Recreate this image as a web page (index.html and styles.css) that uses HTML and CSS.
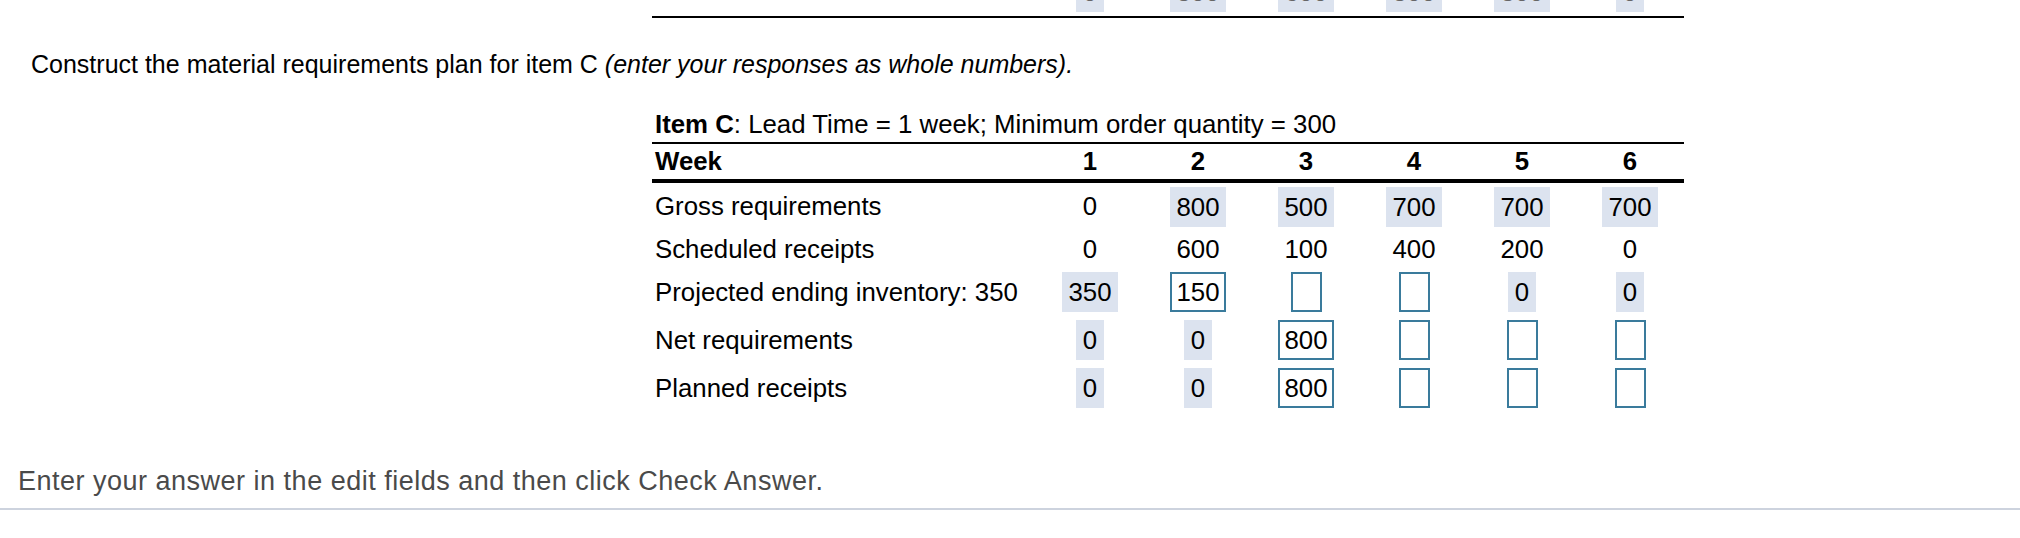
FILE: index.html
```html
<!DOCTYPE html>
<html lang="en">
<head>
<meta charset="utf-8">
<title>MRP item C</title>
<link rel="stylesheet" href="styles.css">
</head>
<body>
<div class="prev">
  <div class="row prev-row">
    <div class="label">Planned order releases</div>
    <div class="cell"><span class="hl">0</span></div>
    <div class="cell"><span class="hl">300</span></div>
    <div class="cell"><span class="hl">600</span></div>
    <div class="cell"><span class="hl">300</span></div>
    <div class="cell"><span class="hl">300</span></div>
    <div class="cell"><span class="hl">0</span></div>
  </div>
</div>

<p class="prompt">Construct the material requirements plan for item C <em>(enter your responses as whole numbers).</em></p>

<div class="mrp">
  <div class="caption"><b>Item C</b>: Lead Time = 1 week; Minimum order quantity = 300</div>
  <div class="row head">
    <div class="label">Week</div>
    <div class="cell">1</div>
    <div class="cell">2</div>
    <div class="cell">3</div>
    <div class="cell">4</div>
    <div class="cell">5</div>
    <div class="cell">6</div>
  </div>
  <div class="row r-gross">
    <div class="label">Gross requirements</div>
    <div class="cell">0</div>
    <div class="cell"><span class="hl">800</span></div>
    <div class="cell"><span class="hl">500</span></div>
    <div class="cell"><span class="hl">700</span></div>
    <div class="cell"><span class="hl">700</span></div>
    <div class="cell"><span class="hl">700</span></div>
  </div>
  <div class="row r-sched">
    <div class="label">Scheduled receipts</div>
    <div class="cell">0</div>
    <div class="cell">600</div>
    <div class="cell">100</div>
    <div class="cell">400</div>
    <div class="cell">200</div>
    <div class="cell">0</div>
  </div>
  <div class="row r-input">
    <div class="label">Projected ending inventory: 350</div>
    <div class="cell"><span class="hl">350</span></div>
    <div class="cell"><span class="inp">150</span></div>
    <div class="cell"><span class="inp"></span></div>
    <div class="cell"><span class="inp"></span></div>
    <div class="cell"><span class="hl">0</span></div>
    <div class="cell"><span class="hl">0</span></div>
  </div>
  <div class="row r-input">
    <div class="label">Net requirements</div>
    <div class="cell"><span class="hl">0</span></div>
    <div class="cell"><span class="hl">0</span></div>
    <div class="cell"><span class="inp">800</span></div>
    <div class="cell"><span class="inp"></span></div>
    <div class="cell"><span class="inp"></span></div>
    <div class="cell"><span class="inp"></span></div>
  </div>
  <div class="row r-input">
    <div class="label">Planned receipts</div>
    <div class="cell"><span class="hl">0</span></div>
    <div class="cell"><span class="hl">0</span></div>
    <div class="cell"><span class="inp">800</span></div>
    <div class="cell"><span class="inp"></span></div>
    <div class="cell"><span class="inp"></span></div>
    <div class="cell"><span class="inp"></span></div>
  </div>
</div>

<div class="footer">Enter your answer in the edit fields and then click Check Answer.</div>
</body>
</html>
```

FILE: styles.css
```css
html, body {
  margin: 0;
  padding: 0;
  background: #ffffff;
}

body {
  font-family: "Liberation Sans", Arial, Helvetica, sans-serif;
  color: #000000;
}

.row {
  display: grid;
  grid-template-columns: 384px repeat(6, 108px);
  align-items: center;
}

.label {
  padding-left: 3px;
  white-space: nowrap;
}

.cell {
  text-align: center;
  white-space: nowrap;
}

.prev {
  width: 1032px;
  margin-left: 652px;
  height: 16px;
  overflow: hidden;
  border-bottom: 2px solid #000000;
  display: flex;
  flex-direction: column;
  justify-content: flex-end;
}

.prev .prev-row {
  flex: none;
  height: 40px;
  margin-bottom: 4px;
  font-size: 25.8px;
  color: #666666;
  align-items: stretch;
}

.prev .prev-row .label {
  line-height: 30px;
  padding-top: 0;
  align-self: start;
}

.prev .prev-row .cell {
  display: flex;
  justify-content: center;
  height: 40px;
}

.prev .prev-row .hl {
  display: block;
  height: 40px;
  line-height: 40px;
}

.prompt {
  margin: 32px 0 0 31px;
  font-size: 25px;
  line-height: 28px;
}

.prompt em {
  font-style: italic;
}

.mrp {
  width: 1032px;
  margin: 31px 0 0 652px;
  font-size: 25.8px;
}

.caption {
  line-height: 30px;
  padding-bottom: 3px;
  border-bottom: 2px solid #000000;
  padding-left: 3px;
}

.caption b {
  font-weight: bold;
}

.head {
  height: 35px;
  font-weight: bold;
  border-bottom: 4px solid #000000;
}

.r-gross {
  height: 47px;
}

.r-sched {
  height: 38px;
}

.r-input {
  height: 48px;
}

.hl {
  display: inline-block;
  height: 40px;
  line-height: 40px;
  padding: 0 6.5px;
  background: #dce3ef;
  vertical-align: middle;
}

.inp {
  display: inline-block;
  box-sizing: border-box;
  height: 40px;
  min-width: 31px;
  line-height: 36px;
  padding: 0 4.5px;
  border: 2px solid #3a7b9c;
  background: #ffffff;
  vertical-align: middle;
}

.footer {
  margin-top: 53px;
  padding: 0 0 11px 18px;
  font-size: 27px;
  letter-spacing: 0.5px;
  line-height: 32px;
  color: #4a4a4a;
  border-bottom: 2px solid #cdd3de;
}
```
